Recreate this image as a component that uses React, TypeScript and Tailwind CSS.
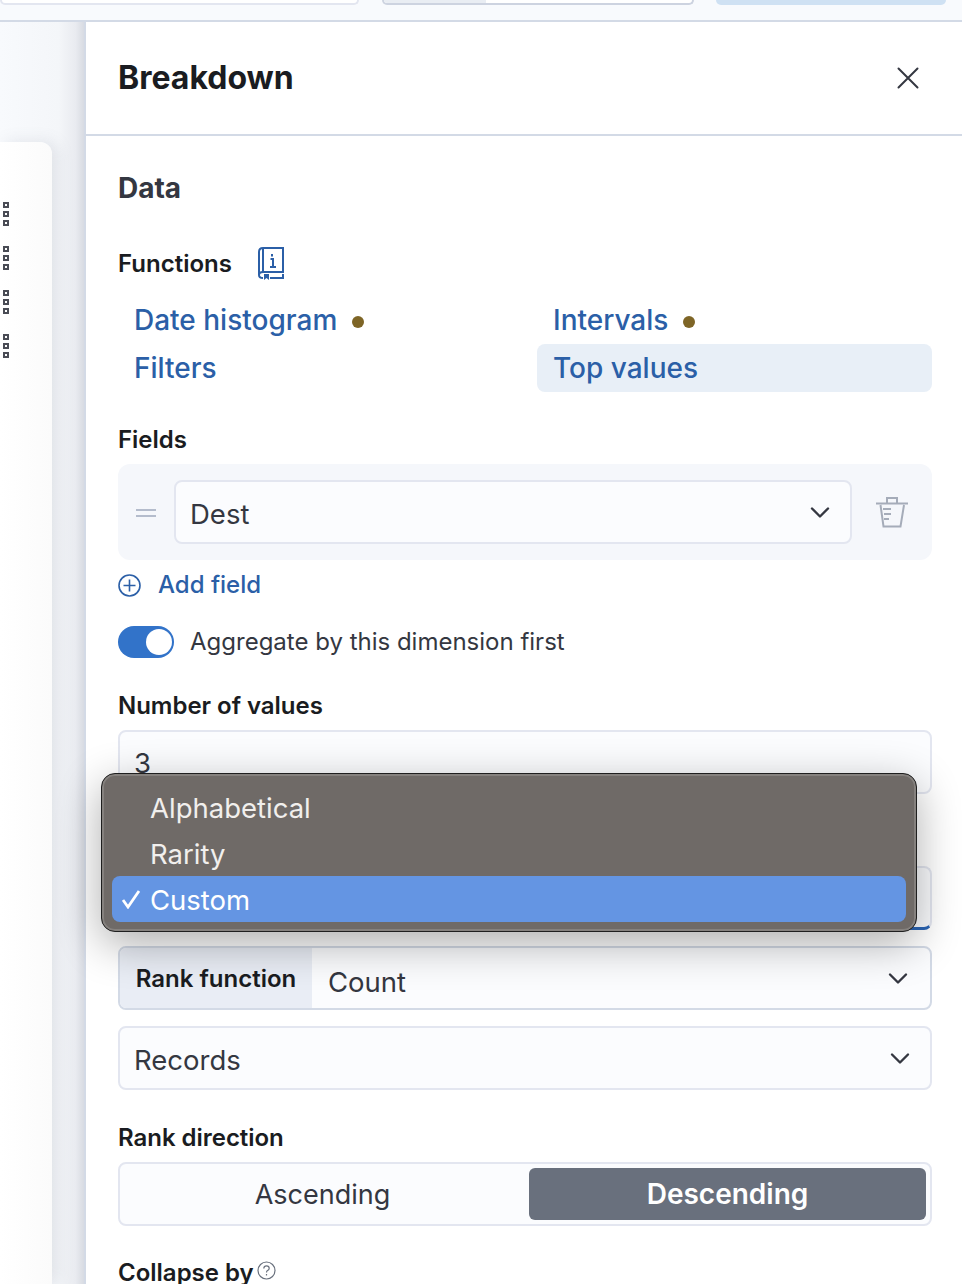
import React from "react"

const fieldBox = "flex items-center h-16 rounded-[8px] border-2 border-[#e3e6f0] bg-[#fbfcfe]"

const Label = ({ children }: { children?: React.ReactNode }) => (
    <div className="h-8 pt-[2px] mt-[31px] mb-[9px] flex items-center text-[24px] tracking-[-0.03px] font-semibold text-[#1a1c21]">{children}</div>
)

const Chevron = () => (
    <svg width="20" height="13" viewBox="0 0 20 13" fill="none" stroke="#343741" strokeWidth="2.4" strokeLinecap="round" strokeLinejoin="round">
        <path d="M2 2.5 L10 10.5 L18 2.5" />
    </svg>
)

const Grip = () => (
    <div className="flex flex-col gap-[3px]">
        <div className="w-[6px] h-[6px] border-2 border-[#4a4c55] bg-white"></div>
        <div className="w-[6px] h-[6px] border-2 border-[#4a4c55] bg-white"></div>
        <div className="w-[6px] h-[6px] border-2 border-[#4a4c55] bg-white"></div>
    </div>
)

const Dot = () => <span className="w-[12px] h-[12px] rounded-full bg-[#7e6526] ml-[15px] mt-[3px]"></span>

const FunctionLink = ({ label, dot, active }: { label: string; dot?: boolean; active?: boolean }) => (
    <div className={`h-12 px-4 flex items-center rounded-[8px] text-[28px] font-medium text-[#2b5fa7] ${active ? "bg-[#e8eff7]" : ""}`}>
        {label}
        {dot && <Dot />}
    </div>
)

const App: React.FC = () => {
    return (
        <div className="w-[962px] h-[1284px] overflow-hidden flex flex-col bg-[#f8fafd] font-['Inter',sans-serif] text-[#343741]">
            <div className="h-[22px] shrink-0 border-b-2 border-[#d3dae6]">
                <div className="flex h-[5px]">
                    <div className="w-[359px] border-x-2 border-b-2 border-[#e3e6f0] rounded-b-[8px] bg-white"></div>
                    <div className="w-[312px] ml-[23px] flex overflow-hidden border-x-2 border-b-2 border-[#cdd3e0] rounded-b-[8px] bg-white">
                        <div className="w-[102px] bg-[#e9edf3]"></div>
                    </div>
                    <div className="w-[230px] ml-[22px] rounded-b-[8px] bg-[#cfe1f3]"></div>
                </div>
            </div>

            <div className="flex flex-1 min-h-0">
                <div className="w-[84px] shrink-0 pt-[120px] bg-[linear-gradient(90deg,#f8fafd_0%,#f4f6f9_70%,#e9ebf0_90%,#d8dbe2_100%)]">
                    <div className="w-[52px] h-[1142px] rounded-tr-[12px] bg-gradient-to-r from-white to-[#fbfbfb] shadow-[6px_0_16px_rgba(120,125,140,0.16)] pl-[3px] pt-[60px] flex flex-col gap-5">
                        <Grip />
                        <Grip />
                        <Grip />
                        <Grip />
                    </div>
                </div>

                <div className="relative flex-1 min-w-0 bg-white border-l-2 border-[#d3dae6]">
                    <div className="h-[114px] flex items-center justify-between border-b-2 border-[#d3dae6] pl-8 pr-[42px]">
                        <h1 className="text-[32px] font-bold text-[#1a1c21]">Breakdown</h1>
                        <svg width="24" height="24" viewBox="0 0 24 24" fill="none" stroke="#343741" strokeWidth="2" strokeLinecap="round">
                            <path d="M2.5 2.5 L21.5 21.5 M21.5 2.5 L2.5 21.5" />
                        </svg>
                    </div>

                    <div className="pl-8 pr-[30px] pt-[34px]">
                        <div className="h-9 flex items-center text-[28px] font-bold text-[#343741]">Data</div>

                        <div className="h-[34px] mt-10 flex items-center text-[24px] font-semibold text-[#1a1c21]">
                            <span className="pt-[2px]">Functions</span>
                            <svg className="ml-[25px]" width="27" height="34" viewBox="0 0 27 34" fill="none" stroke="#2b5fa7" strokeWidth="2">
                                <path d="M6 2 H26 V26 H6 Q2 26 2 29 V6 Q2 2 6 2 Z" />
                                <path d="M6 2 V26" />
                                <path d="M2 29 Q2 32 6 32 M13 32 H26 V28" />
                                <path d="M7 28 H12 V34 L9.5 32 L7 34 Z" fill="#2b5fa7" stroke="none" />
                                <path d="M13.5 13 H16 V21 M13 21 H19" />
                                <path d="M15 8 V10.5" />
                            </svg>
                        </div>

                        <div className="mt-4 grid grid-cols-2 gap-x-6">
                            <FunctionLink label="Date histogram" dot />
                            <FunctionLink label="Intervals" dot />
                            <FunctionLink label="Filters" />
                            <FunctionLink label="Top values" active />
                        </div>

                        <Label>Fields</Label>
                        <div className="h-24 flex items-center rounded-[12px] bg-[#f5f7fb] pl-[18px] pr-6">
                            <div className="w-[20px] h-[8px] mt-[2px] mr-[18px] border-y-2 border-[#b4bccc]"></div>
                            <div className={`${fieldBox} flex-1 pl-[14px] pr-5 justify-between text-[27.5px]`}>
                                <span className="pt-1.5">Dest</span>
                                <Chevron />
                            </div>
                            <svg className="ml-6" width="32" height="32" viewBox="0 0 32 32" fill="none" stroke="#a5acb9" strokeWidth="2">
                                <path d="M0 7.5 H32 M11 7 V2 H21 V7 M4.5 9 L7.5 30.5 H24.5 L28 9 M7 13 H15 M8 18 H15 M8 23 H13" />
                            </svg>
                        </div>

                        <div className="h-8 mt-[9px] flex items-center text-[24px] font-medium text-[#2b5fa7]">
                            <svg width="23" height="23" viewBox="0 0 23 23" fill="none" stroke="#2b5fa7" strokeWidth="1.6">
                                <circle cx="11.5" cy="11.5" r="10.5" />
                                <path d="M11.5 5.5 V17.5 M5.5 11.5 H17.5" />
                            </svg>
                            <span className="ml-[17px]">Add field</span>
                        </div>

                        <div className="h-8 mt-[25px] flex items-center text-[24px]">
                            <div className="w-14 h-8 rounded-full bg-[#3273c9] flex items-center justify-end pr-[2px]">
                                <div className="w-[26px] h-[26px] rounded-full bg-white"></div>
                            </div>
                            <span className="ml-4">Aggregate by this dimension first</span>
                        </div>

                        <Label>Number of values</Label>
                        <div className={`${fieldBox} pl-[14px] text-[27.5px]`}>
                            <span className="pt-1">3</span>
                        </div>

                        {/* covered by the open menu */}
                        <Label />
                        <div className={`${fieldBox} border-b-[3px] border-b-[#2b65b5]`}></div>

                        <div className="mt-4 flex h-16 rounded-[8px] border-2 border-[#d3dae6] bg-[#fbfcfe] overflow-hidden">
                            <div className="w-[192px] shrink-0 pt-[2px] bg-[#e9edf5] flex items-center justify-center text-[24px] font-semibold text-[#1a1c21]">Rank function</div>
                            <div className="flex-1 flex items-center justify-between pl-4 pr-[22px] text-[27.5px]">
                                <span className="pt-2.5">Count</span>
                                <Chevron />
                            </div>
                        </div>

                        <div className={`${fieldBox} mt-4 pl-[14px] pr-5 justify-between text-[27.5px]`}>
                            <span className="pt-1.5">Records</span>
                            <Chevron />
                        </div>

                        <Label>Rank direction</Label>
                        <div className={`${fieldBox} p-1 text-[27px]`}>
                            <div className="flex-1 pt-[2px] pr-2 text-center">Ascending</div>
                            <div className="w-[397px] h-[52px] rounded-[6px] bg-[#69707d] flex items-center justify-center text-[28px] font-semibold text-white">Descending</div>
                        </div>

                        <div className="h-8 pt-[2px] mt-[30px] flex items-center text-[24px] font-semibold text-[#1a1c21]">
                            Collapse by
                            <svg className="ml-[3px] mt-[-6px]" width="19" height="19" viewBox="0 0 19 19" fill="none" stroke="#69707d" strokeWidth="1.2">
                                <circle cx="9.5" cy="9.5" r="8.5" />
                                <path d="M6.8 7.4 Q6.9 4.9 9.5 4.9 Q12.2 4.9 12.2 7.2 Q12.2 8.7 10.6 9.6 Q9.5 10.2 9.5 11.6 M9.5 13 V14.5" />
                            </svg>
                        </div>
                    </div>

                    <div className="absolute left-[15px] top-[751px] w-[816px] h-[159px] rounded-[14px] border border-[#1f1f1f] bg-[#6f6a67] ring-2 ring-inset ring-[#85817e] shadow-[0_12px_44px_rgba(0,0,0,0.32)] px-[10px] pt-[10px] text-[27.5px] text-[#f1efed]">
                        <div className="h-[46px] pt-1 pl-[38px] flex items-center">Alphabetical</div>
                        <div className="h-[46px] pt-1 pl-[38px] flex items-center">Rarity</div>
                        <div className="h-[46px] rounded-[8px] bg-[#6495e3] text-white flex items-center">
                            <svg className="ml-[9px] mr-[9px]" width="20" height="20" viewBox="0 0 20 20" fill="none" stroke="#ffffff" strokeWidth="2.8">
                                <path d="M2 11 L7 18 L18 2" />
                            </svg>
                            <span className="pt-1">Custom</span>
                        </div>
                    </div>
                </div>
            </div>
        </div>
    )
}

export default App
